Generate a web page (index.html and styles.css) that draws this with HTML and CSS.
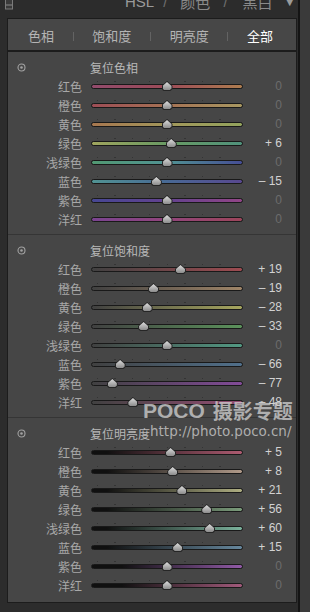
FILE: index.html
```html
<!DOCTYPE html>
<html lang="zh">
<head>
<meta charset="utf-8">
<title>HSL</title>
<link rel="stylesheet" href="styles.css">
</head>
<body>
<div class="app">
  <div class="topbar">
    <svg class="toggle" viewBox="0 0 8 10" width="8" height="10"><rect x="0.5" y="-2" width="7" height="11" fill="#3a3a3a" stroke="#7a7a7a"/><line x1="1" y1="5" x2="7" y2="5" stroke="#8a8a8a"/></svg>
    <div class="modes">
      <span class="hsl">HSL</span><span class="slash sl-a">/</span><span class="m m-a">颜色</span><span class="slash sl-b">/</span><span class="m m-b">黑白</span><span class="tri">▼</span>
    </div>
  </div>
  <div class="tabs">
    <span class="tab">色相</span><span class="sep"></span>
    <span class="tab">饱和度</span><span class="sep"></span>
    <span class="tab">明亮度</span><span class="sep"></span>
    <span class="tab active">全部</span>
  </div>
  <div class="panel">
    <section class="group">
      <div class="ghead"><svg class="reset" viewBox="0 0 9 9" width="9" height="9"><circle cx="4.5" cy="4.5" r="3.5" fill="none" stroke="#a2a2a2" stroke-width="1.1"/><circle cx="4.5" cy="4.5" r="1.3" fill="#a2a2a2"/></svg><span class="gtitle">复位色相</span></div>
      <div class="row"><span class="label">红色</span><div class="slider"><div class="track h1"></div><div class="thumb" style="--v:0"></div></div><span class="val zero">0</span></div>
      <div class="row"><span class="label">橙色</span><div class="slider"><div class="track h2"></div><div class="thumb" style="--v:0"></div></div><span class="val zero">0</span></div>
      <div class="row"><span class="label">黄色</span><div class="slider"><div class="track h3"></div><div class="thumb" style="--v:0"></div></div><span class="val zero">0</span></div>
      <div class="row"><span class="label">绿色</span><div class="slider"><div class="track h4"></div><div class="thumb" style="--v:6"></div></div><span class="val">+ 6</span></div>
      <div class="row"><span class="label">浅绿色</span><div class="slider"><div class="track h5"></div><div class="thumb" style="--v:0"></div></div><span class="val zero">0</span></div>
      <div class="row"><span class="label">蓝色</span><div class="slider"><div class="track h6"></div><div class="thumb" style="--v:-15"></div></div><span class="val">– 15</span></div>
      <div class="row"><span class="label">紫色</span><div class="slider"><div class="track h7"></div><div class="thumb" style="--v:0"></div></div><span class="val zero">0</span></div>
      <div class="row"><span class="label">洋红</span><div class="slider"><div class="track h8"></div><div class="thumb" style="--v:0"></div></div><span class="val zero">0</span></div>
    </section>
    <section class="group">
      <div class="ghead"><svg class="reset" viewBox="0 0 9 9" width="9" height="9"><circle cx="4.5" cy="4.5" r="3.5" fill="none" stroke="#a2a2a2" stroke-width="1.1"/><circle cx="4.5" cy="4.5" r="1.3" fill="#a2a2a2"/></svg><span class="gtitle">复位饱和度</span></div>
      <div class="row"><span class="label">红色</span><div class="slider"><div class="track sat1"></div><div class="thumb" style="--v:19"></div></div><span class="val">+ 19</span></div>
      <div class="row"><span class="label">橙色</span><div class="slider"><div class="track sat2"></div><div class="thumb" style="--v:-19"></div></div><span class="val">– 19</span></div>
      <div class="row"><span class="label">黄色</span><div class="slider"><div class="track sat3"></div><div class="thumb" style="--v:-28"></div></div><span class="val">– 28</span></div>
      <div class="row"><span class="label">绿色</span><div class="slider"><div class="track sat4"></div><div class="thumb" style="--v:-33"></div></div><span class="val">– 33</span></div>
      <div class="row"><span class="label">浅绿色</span><div class="slider"><div class="track sat5"></div><div class="thumb" style="--v:0"></div></div><span class="val zero">0</span></div>
      <div class="row"><span class="label">蓝色</span><div class="slider"><div class="track sat6"></div><div class="thumb" style="--v:-66"></div></div><span class="val">– 66</span></div>
      <div class="row"><span class="label">紫色</span><div class="slider"><div class="track sat7"></div><div class="thumb" style="--v:-77"></div></div><span class="val">– 77</span></div>
      <div class="row"><span class="label">洋红</span><div class="slider"><div class="track sat8"></div><div class="thumb" style="--v:-48"></div></div><span class="val">– 48</span></div>
    </section>
    <section class="group">
      <div class="ghead"><svg class="reset" viewBox="0 0 9 9" width="9" height="9"><circle cx="4.5" cy="4.5" r="3.5" fill="none" stroke="#a2a2a2" stroke-width="1.1"/><circle cx="4.5" cy="4.5" r="1.3" fill="#a2a2a2"/></svg><span class="gtitle">复位明亮度</span></div>
      <div class="row"><span class="label">红色</span><div class="slider"><div class="track l1"></div><div class="thumb" style="--v:5"></div></div><span class="val">+ 5</span></div>
      <div class="row"><span class="label">橙色</span><div class="slider"><div class="track l2"></div><div class="thumb" style="--v:8"></div></div><span class="val">+ 8</span></div>
      <div class="row"><span class="label">黄色</span><div class="slider"><div class="track l3"></div><div class="thumb" style="--v:21"></div></div><span class="val">+ 21</span></div>
      <div class="row"><span class="label">绿色</span><div class="slider"><div class="track l4"></div><div class="thumb" style="--v:56"></div></div><span class="val">+ 56</span></div>
      <div class="row"><span class="label">浅绿色</span><div class="slider"><div class="track l5"></div><div class="thumb" style="--v:60"></div></div><span class="val">+ 60</span></div>
      <div class="row"><span class="label">蓝色</span><div class="slider"><div class="track l6"></div><div class="thumb" style="--v:15"></div></div><span class="val">+ 15</span></div>
      <div class="row"><span class="label">紫色</span><div class="slider"><div class="track l7"></div><div class="thumb" style="--v:0"></div></div><span class="val zero">0</span></div>
      <div class="row"><span class="label">洋红</span><div class="slider"><div class="track l8"></div><div class="thumb" style="--v:0"></div></div><span class="val zero">0</span></div>
    </section>
  </div>
  <div class="watermark">
    <div class="wm1"><span class="poco">POCO</span><span class="wmcn">摄影专题</span></div>
    <div class="wm2">http://photo.poco.cn/</div>
  </div>
</div>
</body>
</html>
```
FILE: styles.css
```css
* { box-sizing: border-box; }
html, body { margin: 0; padding: 0; }
body {
  width: 310px;
  height: 612px;
  overflow: hidden;
  background: linear-gradient(90deg, #2c2c2c 0 298px, #141414 298px 300px, #3a3a3a 300px);
  font-family: "Noto Sans CJK SC", sans-serif;
}
.app { position: relative; width: 298px; }

.topbar { height: 18px; display: flex; overflow: hidden; }
.toggle { margin-left: 5px; flex: none; }
.modes {
  display: flex;
  align-items: flex-start;
  margin-left: 112px;
  margin-top: -6px;
  font-size: 15px;
  line-height: 15px;
  color: #8a8a8a;
  white-space: nowrap;
}
.hsl { font-family: "Liberation Sans", sans-serif; font-size: 15px; color: #9a9a9a; }
.slash { font-family: "Liberation Sans", sans-serif; color: #6e6e6e; }
.sl-a { margin-left: 9px; }
.m-a { margin-left: 13px; }
.sl-b { margin-left: 13px; }
.m-b { margin-left: 15px; }
.tri { margin-left: 13px; font-size: 11px; color: #9a9a9a; font-family: "DejaVu Sans", sans-serif; }

.tabs {
  margin-left: 7px;
  width: 290px;
  height: 33px;
  border: 1px solid #1c1c1c;
  background: #474747;
  display: flex;
  align-items: center;
  justify-content: space-between;
  padding: 3px 23px 0 20px;
}
.tab { font-size: 13px; line-height: 16px; color: #b4b4b4; }
.tab.active { color: #ffffff; }
.sep { width: 1px; height: 9px; background: #636363; }

.panel {
  margin-left: 7px;
  width: 290px;
  border: 1px solid #1c1c1c;
  background: #464646;
}
.group { padding: 6px 0 5px; border-bottom: 1px solid #353535; }
.group:last-child { border-bottom: 0; padding-bottom: 7px; }

.ghead, .row {
  display: grid;
  grid-template-columns: 74px 161px 39px;
  height: 19px;
  align-items: center;
}
.reset { margin-left: 9px; }
.gtitle { padding-left: 8px; font-size: 12px; line-height: 19px; color: #b8b8b8; }
.label { justify-self: end; font-size: 12px; line-height: 19px; color: #a8a8a8; }
.val {
  justify-self: end;
  font-family: "Liberation Sans", sans-serif;
  font-size: 12px;
  line-height: 19px;
  color: #d2d2d2;
  white-space: pre;
}
.val.zero { color: #6c6c6c; }

.slider {
  position: relative;
  margin-left: 9px;
  width: 152px;
  height: 19px;
  display: flex;
  align-items: center;
}
.slider::before {
  content: "";
  position: absolute;
  left: 6px;
  right: 6px;
  top: 4px;
  height: 1px;
  background: repeating-linear-gradient(90deg, rgba(30,30,30,0.45) 0 1px, transparent 1px 17.5px);
}
.track {
  width: 100%;
  height: 5px;
  border-radius: 3px;
  border: 1px solid #1a1a1a;
  filter: saturate(0.72) brightness(0.95);
}
.thumb {
  position: absolute;
  top: 4px;
  left: calc(50% - 5.5px + var(--v) * 0.71px);
  width: 11px;
  height: 10px;
  background: #262626;
  clip-path: polygon(50% 0, 100% 50%, 100% 80%, 82% 100%, 18% 100%, 0 80%, 0 50%);
}
.thumb::after {
  content: "";
  position: absolute;
  inset: 1px;
  background: linear-gradient(#dcdcdc, #8c8c8c);
  clip-path: polygon(50% 0, 100% 50%, 100% 80%, 82% 100%, 18% 100%, 0 80%, 0 50%);
}

/* hue */
.h1 { background: linear-gradient(90deg, #b04878, #c0485a 50%, #c8803e); }
.h2 { background: linear-gradient(90deg, #c04a56, #c07448 50%, #b8a050); }
.h3 { background: linear-gradient(90deg, #c07a40, #b0a048 50%, #98b048); }
.h4 { background: linear-gradient(90deg, #a8b048, #60a858 50%, #40a080); }
.h5 { background: linear-gradient(90deg, #40a870, #40a0a0 50%, #4450b8); }
.h6 { background: linear-gradient(90deg, #40a0a0, #4070b0 50%, #6048b0); }
.h7 { background: linear-gradient(90deg, #4848b8, #7040b0 50%, #b040a0); }
.h8 { background: linear-gradient(90deg, #9040b0, #b04090 50%, #c04060); }

/* saturation */
.sat1 { background: linear-gradient(90deg, #444, #c04850); }
.sat2 { background: linear-gradient(90deg, #444, #b08a60); }
.sat3 { background: linear-gradient(90deg, #444, #b0b048); }
.sat4 { background: linear-gradient(90deg, #444, #50a050); }
.sat5 { background: linear-gradient(90deg, #444, #40a888); }
.sat6 { background: linear-gradient(90deg, #444, #4a78a0); }
.sat7 { background: linear-gradient(90deg, #444, #9848b8); }
.sat8 { background: linear-gradient(90deg, #444, #b04a80); }

/* luminance */
.l1 { background: linear-gradient(90deg, #111 10%, #d05878); }
.l2 { background: linear-gradient(90deg, #111 10%, #c0a088); }
.l3 { background: linear-gradient(90deg, #111 10%, #b8b878); }
.l4 { background: linear-gradient(90deg, #111 10%, #78a878); }
.l5 { background: linear-gradient(90deg, #111 10%, #70c0a0); }
.l6 { background: linear-gradient(90deg, #111 10%, #6090b0); }
.l7 { background: linear-gradient(90deg, #111 20%, #a858c8); }
.l8 { background: linear-gradient(90deg, #111 20%, #c05888); }

.watermark {
  position: absolute;
  left: 143px;
  top: 398px;
  color: rgba(205, 205, 205, 0.78);
  white-space: nowrap;
  pointer-events: none;
}
.wm1 { display: flex; align-items: center; height: 26px; }
.poco { font-family: "Liberation Sans", sans-serif; font-weight: bold; font-size: 21px; line-height: 26px; }
.wmcn { margin-left: 8px; font-weight: bold; font-size: 20px; line-height: 26px; }
.wm2 { margin-left: 7px; font-family: "DejaVu Sans", sans-serif; font-size: 13.5px; line-height: 15px; }
```
